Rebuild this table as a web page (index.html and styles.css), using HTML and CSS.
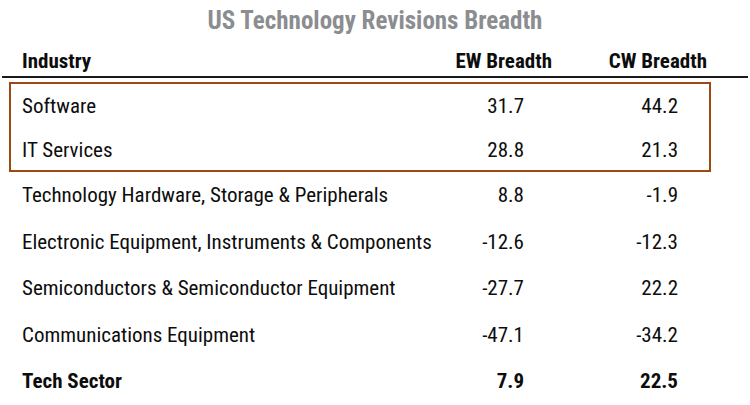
FILE: index.html
```html
<!DOCTYPE html>
<html lang="en">
<head>
<meta charset="utf-8">
<title>US Technology Revisions Breadth</title>
<link rel="stylesheet" href="styles.css">
</head>
<body>
<div class="page">
  <h1 class="title">US Technology Revisions Breadth</h1>
  <div class="row head">
    <div class="name">Industry</div>
    <div class="ew">EW Breadth</div>
    <div class="cw">CW Breadth</div>
  </div>
  <div class="highlight">
    <div class="row in-box first">
      <div class="name">Software</div>
      <div class="ew num">31.7</div>
      <div class="cw num">44.2</div>
    </div>
    <div class="row in-box second">
      <div class="name">IT Services</div>
      <div class="ew num">28.8</div>
      <div class="cw num">21.3</div>
    </div>
  </div>
  <div class="row body">
    <div class="name">Technology Hardware, Storage &amp; Peripherals</div>
    <div class="ew num">8.8</div>
    <div class="cw num">-1.9</div>
  </div>
  <div class="row body">
    <div class="name">Electronic Equipment, Instruments &amp; Components</div>
    <div class="ew num">-12.6</div>
    <div class="cw num">-12.3</div>
  </div>
  <div class="row body">
    <div class="name">Semiconductors &amp; Semiconductor Equipment</div>
    <div class="ew num">-27.7</div>
    <div class="cw num">22.2</div>
  </div>
  <div class="row body">
    <div class="name">Communications Equipment</div>
    <div class="ew num">-47.1</div>
    <div class="cw num">-34.2</div>
  </div>
  <div class="row body total">
    <div class="name">Tech Sector</div>
    <div class="ew num">7.9</div>
    <div class="cw num">22.5</div>
  </div>
</div>
</body>
</html>
```
FILE: styles.css
```css
html, body {
  margin: 0;
  padding: 0;
  background: #ffffff;
}

.page {
  width: 750px;
  height: 405px;
  font-family: "Roboto Condensed", Roboto, "Liberation Sans", sans-serif;
  font-size: 21px;
  color: #0d0d0d;
  overflow: hidden;
}

.title {
  margin: 0;
  padding-top: 6px;
  font-size: 25px;
  line-height: 30px;
  font-weight: 700;
  color: #8b8d90;
  text-align: center;
}

.row {
  display: grid;
  grid-template-columns: minmax(0, 1fr) 150px 155px;
  align-items: center;
  white-space: nowrap;
}

.head {
  margin: 0 2px;
  padding: 10px 41px 0 20px;
  line-height: 30px;
  font-weight: 700;
  border-bottom: 2px solid #1a1a1a;
}

.head .ew,
.head .cw {
  text-align: right;
}

.highlight {
  margin: 4px 39px 0 9px;
  border: 2px solid #9c4912;
  height: 86px;
}

.in-box {
  height: 43px;
  padding: 0 2px 0 11px;
}

.in-box.first {
  line-height: 40px;
}

.in-box.second {
  line-height: 46px;
}

.body {
  height: 46.5px;
  line-height: 46.5px;
  padding: 0 43px 0 22px;
}

.num {
  text-align: right;
}

.ew.num {
  padding-right: 28px;
}

.cw.num {
  padding-right: 29px;
}

.total {
  font-weight: 700;
}
```
